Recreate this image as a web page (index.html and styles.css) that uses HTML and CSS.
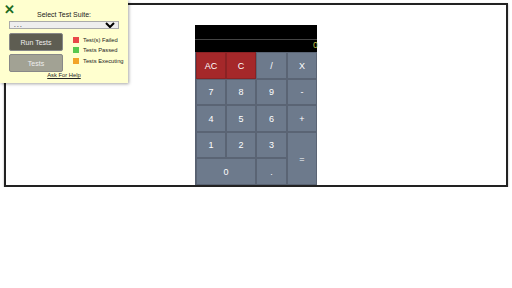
FILE: index.html
```html
<!DOCTYPE html>
<html lang="en">

<head>
    <meta charset="UTF-8">
    <meta name="viewport" content="width=device-width, initial-scale=1.0">
    <title>Calculator</title>
    <link rel="stylesheet" href="styles.css">
</head>

<body>
    <!-- Test runner panel -->
    <div class="test-panel">
        <span class="close">&#x2715;</span>
        <p class="suite-label">Select Test Suite:</p>
        <select class="suite-select">
            <option>- - -</option>
        </select>
        <div class="test-row">
            <div class="test-buttons">
                <button class="run-btn">Run Tests</button>
                <button class="tests-btn">Tests</button>
            </div>
            <ul class="legend">
                <li><span class="swatch failed"></span>Test(s) Failed</li>
                <li><span class="swatch passed"></span>Tests Passed</li>
                <li><span class="swatch running"></span>Tests Executing</li>
            </ul>
        </div>
        <a class="help" href="#">Ask For Help</a>
    </div>

    <div class="frame">
        <div class="calculator">
            <div class="display-top"></div>
            <div class="display">0</div>
            <div class="keys">
                <button class="key red">AC</button>
                <button class="key red">C</button>
                <button class="key">/</button>
                <button class="key">X</button>
                <button class="key">7</button>
                <button class="key">8</button>
                <button class="key">9</button>
                <button class="key">-</button>
                <button class="key">4</button>
                <button class="key">5</button>
                <button class="key">6</button>
                <button class="key">+</button>
                <button class="key">1</button>
                <button class="key">2</button>
                <button class="key">3</button>
                <button class="key equals">=</button>
                <button class="key zero">0</button>
                <button class="key">.</button>
            </div>
        </div>
    </div>
</body>

</html>
```

FILE: styles.css
```css
body {
    margin: 0;
    font-family: 'Liberation Sans', Arial, sans-serif;
    background: #fff;
}

.frame {
    margin: 3px 4px 0 4px;
    height: 162px;
    padding-top: 18px;
    border: 2px solid #222;
    box-shadow: 0 1px 2px rgba(0, 0, 0, 0.3);
    display: flex;
    justify-content: center;
}

.calculator {
    width: 122px;
    background: #000;
    align-self: flex-end;
}

.display-top {
    height: 14px;
    background: #000;
    border-bottom: 1px solid #444;
}

.display {
    height: 12px;
    color: #c4c44a;
    font-size: 9px;
    text-align: right;
    line-height: 11px;
    margin-right: -1px;
}

.keys {
    display: grid;
    grid-template-columns: 30px 30px 31px 30px;
    grid-template-rows: 27px 26px 27px 26px 27px;
    padding-left: 1px;
    background: #576070;
}

.key {
    background: #6d7a8c;
    border: 1px solid #5a6474;
    color: #fff;
    font-family: 'Liberation Sans', Arial, sans-serif;
    font-size: 9px;
    padding: 0;
    margin: 0;
}

.key.red {
    background: #a5282a;
    border-color: #8a2224;
}

.key.equals {
    grid-row: span 2;
}

.key.zero {
    grid-column: span 2;
}

/* test panel */
.test-panel {
    position: absolute;
    top: 0;
    left: 0;
    width: 128px;
    height: 83px;
    background: #ffffcf;
    box-shadow: 1px 1px 3px rgba(0, 0, 0, 0.35);
    font-size: 6px;
    color: #222;
}

.close {
    position: absolute;
    top: 3px;
    left: 4px;
    color: #1e6b1e;
    font-size: 13px;
    font-weight: bold;
    line-height: 13px;
}

.suite-label {
    margin: 11px 0 0 0;
    text-align: center;
    font-size: 7px;
}

.suite-select {
    display: block;
    margin: 3px 0 0 9px;
    width: 110px;
    height: 8px;
    font-size: 5px;
    padding: 0;
    border: 1px solid #aaa;
    background: #eee;
}

.test-row {
    display: flex;
    margin-top: 4px;
    padding-left: 9px;
}

.test-buttons {
    display: flex;
    flex-direction: column;
    gap: 3px;
}

.run-btn,
.tests-btn {
    width: 54px;
    height: 18px;
    border: 1px solid #888;
    border-radius: 2px;
    color: #eee;
    font-family: 'Liberation Sans', Arial, sans-serif;
    font-size: 7px;
    padding: 0;
}

.run-btn {
    background: #5e5d52;
}

.tests-btn {
    background: #a2a294;
}

.legend {
    list-style: none;
    margin: 2px 0 0 10px;
    padding: 0;
}

.legend li {
    display: flex;
    align-items: center;
    height: 10px;
    margin-bottom: 0.4px;
    font-size: 5.8px;
}

.swatch {
    width: 6px;
    height: 6px;
    margin-right: 4px;
}

.failed {
    background: #e94848;
}

.passed {
    background: #58c94e;
}

.running {
    background: #f2a428;
}

.help {
    display: block;
    text-align: center;
    margin-top: 0;
    font-size: 5.8px;
    color: #222;
}
```
